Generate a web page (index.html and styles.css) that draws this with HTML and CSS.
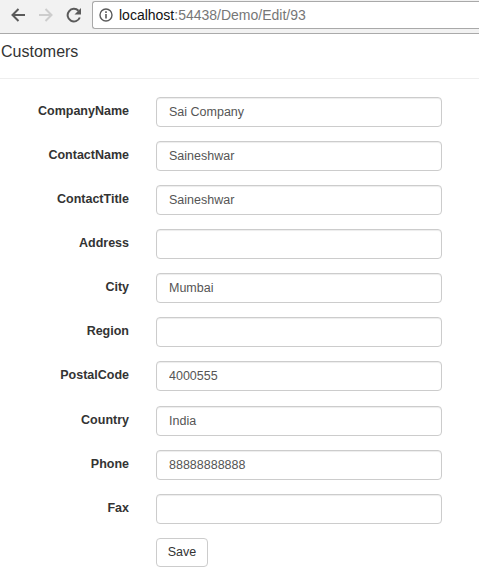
FILE: index.html
```html
<!DOCTYPE html>
<html lang="en">
<head>
<meta charset="UTF-8" />
<title>Customers</title>
<link rel="stylesheet" href="styles.css">
</head>
<body>

  <div class="toolbar">
    <div class="nav">
      <svg class="nav-icon" viewBox="0 0 16 16"><path d="M15 8H3M8.500 2 2.500 8l6 6" fill="none" stroke="#5a5a5a" stroke-width="2"/></svg>
      <svg class="nav-icon" viewBox="0 0 16 16"><path d="M1 8h12M7.500 2l6 6-6 6" fill="none" stroke="#cdcdcd" stroke-width="2"/></svg>
      <svg class="nav-icon" viewBox="0 0 16 16"><path d="M13.800 10.500A6.300 6.300 0 1 1 12.500 3.800" fill="none" stroke="#5a5a5a" stroke-width="2"/><path d="M15 1v6.500H8.500z" fill="#5a5a5a"/></svg>
    </div>
    <div class="address">
      <svg class="info-icon" viewBox="0 0 14 14"><circle cx="7" cy="7" r="6" fill="none" stroke="#5a5a5a" stroke-width="1.400"/><path d="M6.200 6h1.600v4.500H6.200zM6.200 3.300h1.600v1.600H6.200z" fill="#5a5a5a"/></svg>
      <span class="url"><span class="host">localhost</span>:54438/Demo/Edit/93</span>
    </div>
  </div>

  <h4 class="title">Customers</h4>
  <hr class="rule">

  <form class="form">
    <div class="row"><label>CompanyName</label><input type="text" value="Sai Company"></div>
    <div class="row"><label>ContactName</label><input type="text" value="Saineshwar"></div>
    <div class="row"><label>ContactTitle</label><input type="text" value="Saineshwar"></div>
    <div class="row"><label>Address</label><input type="text" value=""></div>
    <div class="row"><label>City</label><input type="text" value="Mumbai"></div>
    <div class="row"><label>Region</label><input type="text" value=""></div>
    <div class="row"><label>PostalCode</label><input type="text" value="4000555"></div>
    <div class="row"><label>Country</label><input type="text" value="India"></div>
    <div class="row"><label>Phone</label><input type="text" value="88888888888"></div>
    <div class="row"><label>Fax</label><input type="text" value=""></div>
    <div class="row"><label></label><button type="button">Save</button></div>
  </form>

</body>
</html>
```
FILE: styles.css
```css
* {
  box-sizing: border-box;
}

body {
  margin: 0;
  background: #fff;
  color: #333;
  font-family: 'Liberation Sans', Arial, sans-serif;
  font-size: 12.500px;
  overflow: hidden;
}

/* Browser chrome */
.toolbar {
  display: flex;
  height: 34px;
  padding-top: 1px;
  background: #f2f2f2;
  border-bottom: 1px solid #aaa;
}

.nav {
  display: flex;
  width: 92px;
  height: 27px;
  align-items: center;
  gap: 12px;
  padding-left: 10px;
}

.nav-icon {
  width: 16px;
  height: 16px;
}

.address {
  display: flex;
  flex: 1;
  height: 28px;
  align-items: center;
  padding-left: 6px;
  background: #fff;
  border: 1px solid #a9a9a9;
  border-right: none;
  border-radius: 3px 0 0 3px;
}

.info-icon {
  width: 14px;
  height: 14px;
  margin-right: 6px;
}

.url {
  color: #777;
  font-size: 14px;
}

.host {
  color: #111;
}

/* Page header */
.title {
  margin: 9px 0 0;
  padding-left: 1px;
  font-size: 16px;
  font-weight: 400;
  line-height: 18px;
}

.rule {
  height: 1px;
  margin: 17px 0 0;
  border: none;
  background: #eee;
}

/* Form */
.form {
  padding-top: 18px;
}

.row {
  display: flex;
  align-items: flex-start;
  margin-bottom: 14.080px;
}

.row label {
  width: 129px;
  margin-right: 27px;
  padding-top: 6px;
  font-weight: 700;
  line-height: 16px;
  text-align: right;
}

.row input {
  width: 286px;
  height: 30px;
  padding: 6px 12px;
  color: #555;
  font: inherit;
  background: #fff;
  border: 1px solid #ccc;
  border-radius: 4px;
  box-shadow: inset 0 1px 1px rgba(0,0,0,0.075);
}

.row button {
  width: 52px;
  height: 29px;
  padding: 0;
  color: #333;
  font: inherit;
  background: #fff;
  border: 1px solid #ccc;
  border-radius: 4px;
}
```
